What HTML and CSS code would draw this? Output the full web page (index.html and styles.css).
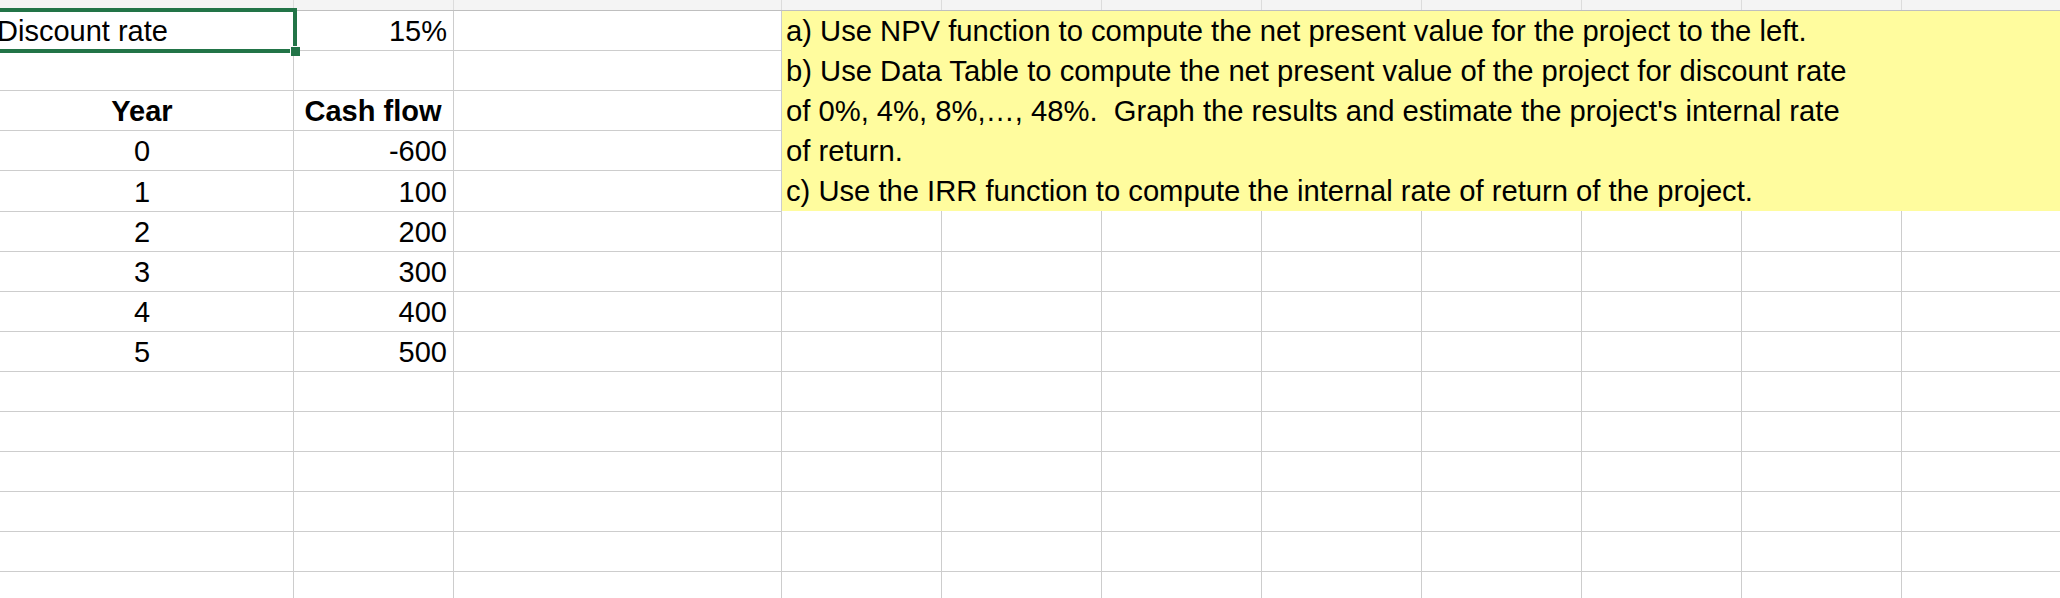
FILE: index.html
```html
<!DOCTYPE html>
<html>
<head>
<meta charset="utf-8">
<title>Sheet</title>
<link rel="stylesheet" href="styles.css">
</head>
<body>
<table class="sheet">
  <colgroup>
    <col class="col-a"><col class="col-b"><col class="col-c">
    <col class="col-n"><col class="col-n"><col class="col-n"><col class="col-n">
    <col class="col-n"><col class="col-n"><col class="col-n"><col class="col-n">
  </colgroup>
  <thead>
    <tr class="hdr"><th></th><th></th><th></th><th></th><th></th><th></th><th></th><th></th><th></th><th></th><th></th></tr>
  </thead>
  <tbody>
    <tr>
      <td class="sel">Discount rate<span class="sel-box"><span class="sel-handle"></span></span></td>
      <td class="r">15%</td>
      <td></td>
      <td class="note" colspan="8" rowspan="5">
        <p>a) Use NPV function to compute the net present value for the project to the left.</p>
        <p>b) Use Data Table to compute the net present value of the project for discount rate<br>of 0%, 4%, 8%,…, 48%.&nbsp; Graph the results and estimate the project's internal rate<br>of return.</p>
        <p>c) Use the IRR function to compute the internal rate of return of the project.</p>
      </td>
    </tr>
    <tr><td></td><td></td><td></td></tr>
    <tr><td class="c b">Year</td><td class="c b">Cash flow</td><td></td></tr>
    <tr><td class="c">0</td><td class="r">-600</td><td></td></tr>
    <tr><td class="c">1</td><td class="r">100</td><td></td></tr>
    <tr><td class="c">2</td><td class="r">200</td><td></td><td></td><td></td><td></td><td></td><td></td><td></td><td></td><td></td></tr>
    <tr><td class="c">3</td><td class="r">300</td><td></td><td></td><td></td><td></td><td></td><td></td><td></td><td></td><td></td></tr>
    <tr><td class="c">4</td><td class="r">400</td><td></td><td></td><td></td><td></td><td></td><td></td><td></td><td></td><td></td></tr>
    <tr><td class="c">5</td><td class="r">500</td><td></td><td></td><td></td><td></td><td></td><td></td><td></td><td></td><td></td></tr>
    <tr><td></td><td></td><td></td><td></td><td></td><td></td><td></td><td></td><td></td><td></td><td></td></tr>
    <tr><td></td><td></td><td></td><td></td><td></td><td></td><td></td><td></td><td></td><td></td><td></td></tr>
    <tr><td></td><td></td><td></td><td></td><td></td><td></td><td></td><td></td><td></td><td></td><td></td></tr>
    <tr><td></td><td></td><td></td><td></td><td></td><td></td><td></td><td></td><td></td><td></td><td></td></tr>
    <tr><td></td><td></td><td></td><td></td><td></td><td></td><td></td><td></td><td></td><td></td><td></td></tr>
    <tr><td></td><td></td><td></td><td></td><td></td><td></td><td></td><td></td><td></td><td></td><td></td></tr>
  </tbody>
</table>
</body>
</html>
```

FILE: styles.css
```css
html, body {
  margin: 0;
  padding: 0;
  background: #ffffff;
  overflow: hidden;
}

body {
  width: 2060px;
  height: 598px;
  font-family: "Liberation Sans", Arial, Helvetica, sans-serif;
  font-size: 29px;
  color: #000000;
}

.sheet {
  border-collapse: collapse;
  table-layout: fixed;
  width: 2070px;
  margin-left: -9px;
}

.col-a { width: 302px; }
.col-b { width: 160px; }
.col-c { width: 328px; }
.col-n { width: 160px; }

.hdr th {
  height: 10px;
  padding: 0;
  background: #f4f4f4;
  border-right: 1px solid #dcdcdc;
  border-bottom: 1px solid #bfbfbf;
}

tbody tr {
  height: 40px;
}

tbody td {
  padding: 0 6px 0 5px;
  border: 1px solid #cdcdcd;
  line-height: 38px;
  vertical-align: bottom;
  white-space: nowrap;
  overflow: visible;
}

.c { text-align: center; }
.r { text-align: right; }
.b { font-weight: bold; }

.sel {
  position: relative;
}

.sel-box {
  position: absolute;
  top: -3px;
  bottom: -3px;
  left: -4px;
  right: -4px;
  border: 4px solid #227447;
}

.sel-handle {
  position: absolute;
  right: -7px;
  bottom: -7px;
  width: 9px;
  height: 9px;
  background: #227447;
  border: 1px solid #ffffff;
  border-right: none;
  border-bottom: none;
}

.note {
  background: #fffc9e;
  vertical-align: top;
  padding: 0 0 0 4px;
  font-size: 29.2px;
  line-height: 40px;
  border-top: 1px solid #bfbfbf;
  border-right: hidden;
  border-bottom: hidden;
}

.note p {
  margin: 0;
}
```
